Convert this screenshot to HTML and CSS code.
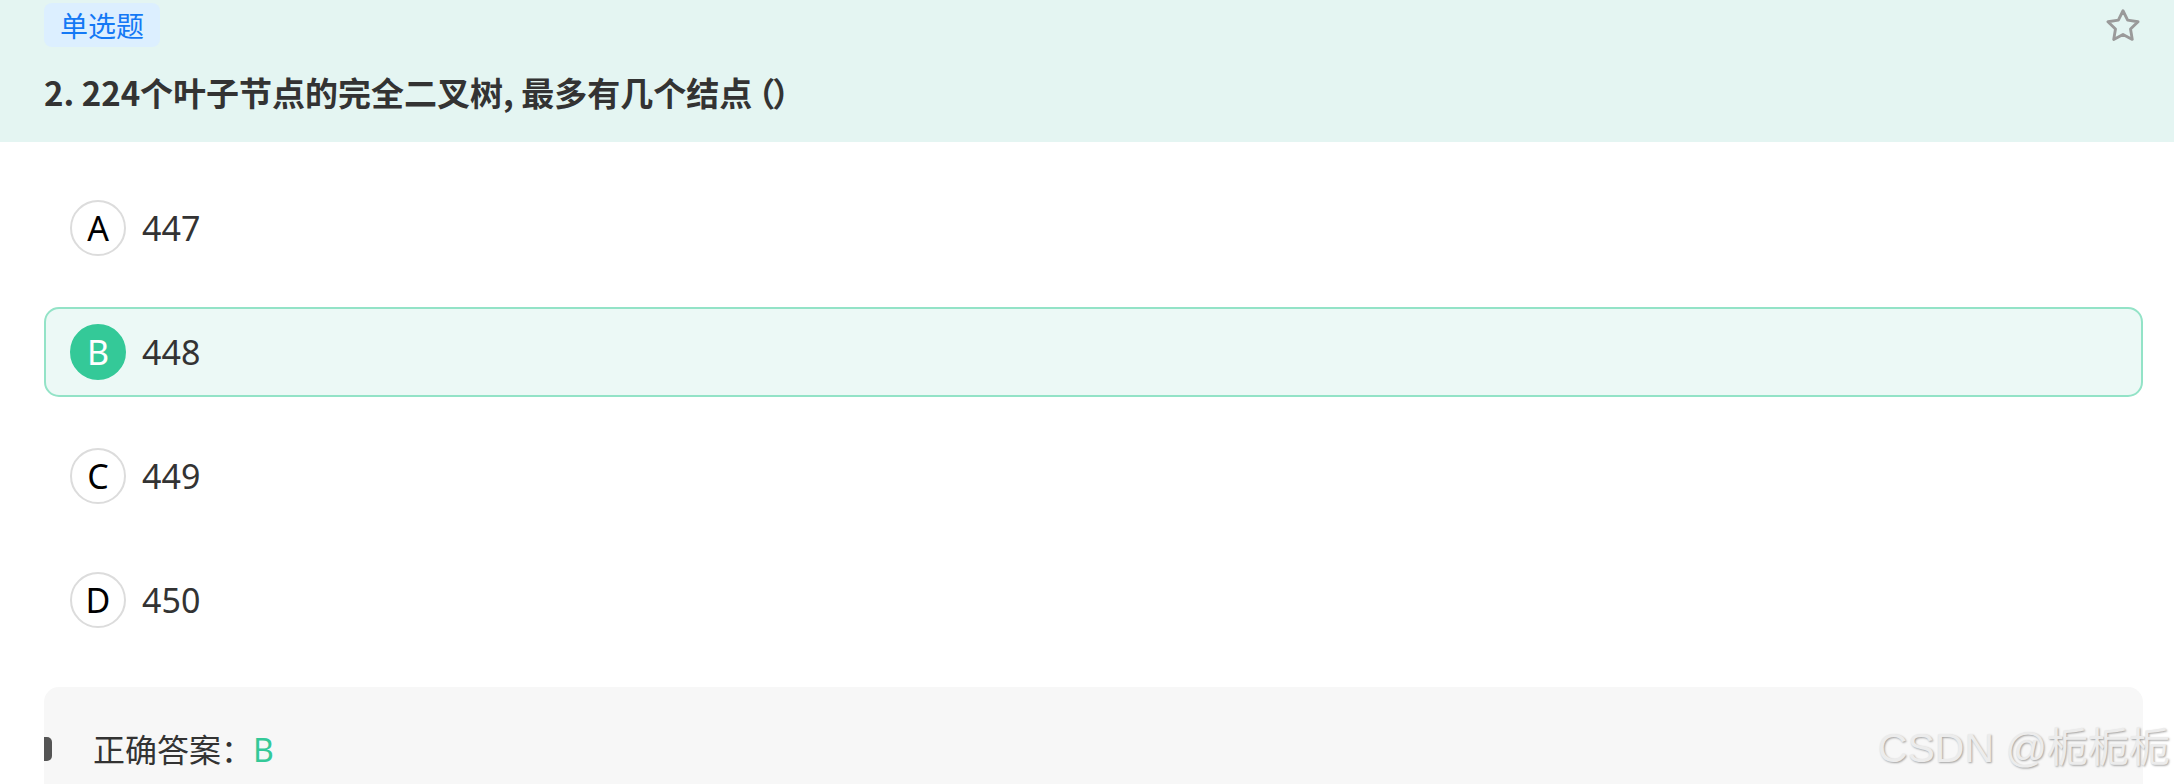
FILE: index.html
```html
<!DOCTYPE html>
<html lang="zh-CN">
  <head>
    <meta charset="utf-8">
    <title>单选题</title>
    <link rel="stylesheet" href="styles.css">
  </head>
  <body>
    <div class="question">
      <div class="q-head">
        <div class="q-top">
          <span class="q-type">单选题</span>
          <svg class="star" width="34" height="32" viewBox="1.5 1.5 21 20">
            <path d="M12 2.6l2.9 5.9 6.5.95-4.7 4.58 1.1 6.47L12 17.45l-5.8 3.05 1.1-6.47-4.7-4.58 6.5-.95z" fill="none" stroke="#9a9a9a" stroke-width="1.8" stroke-linejoin="round"/>
          </svg>
        </div>
        <h2 class="q-title">2. 224个叶子节点的完全二叉树, 最多有几个结点<span class="paren">（）</span></h2>
      </div>

      <ul class="options">
        <li class="option"><span class="opt-key">A</span><span class="opt-text">447</span></li>
        <li class="option selected"><span class="opt-key">B</span><span class="opt-text">448</span></li>
        <li class="option"><span class="opt-key">C</span><span class="opt-text">449</span></li>
        <li class="option"><span class="opt-key">D</span><span class="opt-text">450</span></li>
      </ul>

      <div class="answer">
        <span class="answer-mark"></span>
        <span class="answer-text">正确答案：<span class="answer-key">B</span></span>
      </div>

      <div class="watermark">CSDN @栀栀栀</div>
    </div>
  </body>
</html>
```

FILE: styles.css
```css
/* 기본 */
body {
    margin: 0;
    font-family: "Noto Sans", "Noto Sans CJK SC", sans-serif;
    background-color: #ffffff;
    color: #333;
    overflow: hidden;
}

.question {
    position: relative;
}

/* 문제 헤더 */
.q-head {
    background-color: #e4f5f2;
    height: 142px;
    box-sizing: border-box;
    padding: 3px 34px 0 44px;
}

.q-top {
    display: flex;
    justify-content: space-between;
    align-items: center;
    height: 44px;
}

.q-type {
    display: inline-block;
    height: 44px;
    line-height: 44px;
    padding: 0 16px;
    font-family: "Noto Sans CJK SC", sans-serif;
    font-size: 28px;
    color: #1479f5;
    background-color: #dcefff;
    border-radius: 8px;
}

.star {
    display: block;
}

.q-title {
    margin: 23px 0 0 0;
    font-family: "Noto Sans CJK SC", sans-serif;
    font-size: 33px;
    line-height: 44px;
    font-weight: bold;
    color: #333;
}

.paren {
    font-feature-settings: "palt";
    margin-left: 5px;
}

/* 보기 목록 */
.options {
    list-style: none;
    margin: 41px 0 0 0;
    padding: 0 31px 0 44px;
    display: flex;
    flex-direction: column;
    gap: 34px;
}

.option {
    display: flex;
    align-items: center;
    height: 90px;
    box-sizing: border-box;
    padding-left: 24px;
    border: 2px solid transparent;
    border-radius: 15px;
}

.option.selected {
    background-color: #ecf9f6;
    border-color: #93e3c7;
}

.opt-key {
    display: flex;
    justify-content: center;
    align-items: center;
    width: 56px;
    height: 56px;
    box-sizing: border-box;
    border: 2px solid #dcdcdc;
    border-radius: 50%;
    font-size: 34px;
    color: #000;
}

.selected .opt-key {
    background-color: #34c998;
    border-color: #34c998;
    color: #fff;
}

.opt-text {
    margin-left: 16px;
    font-size: 34px;
    color: #333;
}

/* 정답 영역 */
.answer {
    display: flex;
    align-items: flex-start;
    margin: 42px 31px 0 44px;
    height: 140px;
    box-sizing: border-box;
    padding-top: 39px;
    background-color: #f7f7f7;
    border-radius: 15px 15px 0 0;
}

.answer-mark {
    width: 8px;
    height: 24px;
    margin-top: 11px;
    background-color: #555;
    border-radius: 0 5px 5px 0;
}

.answer-text {
    margin-left: 41px;
    font-family: "Noto Sans CJK SC", sans-serif;
    font-size: 32px;
    line-height: 44px;
    color: #333;
}

.answer-key {
    font-family: "Noto Sans", sans-serif;
    color: #34c998;
}

/* 워터마크 */
.watermark {
    position: absolute;
    right: 4px;
    top: 720px;
    font-family: "Liberation Sans", "Noto Sans CJK SC", sans-serif;
    font-size: 41px;
    line-height: 56px;
    color: #ececec;
    text-shadow: 1px 1px 2px rgba(0,0,0,0.35);
    white-space: nowrap;
}
```
